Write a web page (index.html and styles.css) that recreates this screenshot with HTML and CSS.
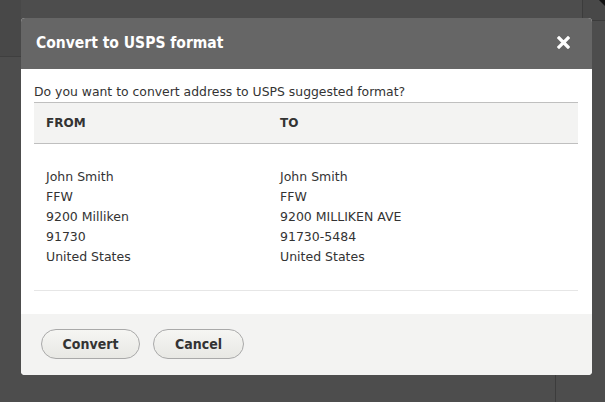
FILE: index.html
```html
<!DOCTYPE html>
<html lang="en">
<head>
<meta charset="utf-8">
<title>Convert to USPS format</title>
<link rel="stylesheet" href="styles.css">
</head>
<body>
<div class="page">
  <div class="backdrop">
    <span class="bg-line bg-line-left"></span>
    <span class="bg-line bg-line-vtop"></span>
    <span class="bg-line bg-line-htop"></span>
    <span class="bg-line bg-line-vbottom"></span>
    <span class="bg-corner"></span>
  </div>
  <div class="dialog" role="dialog">
    <div class="dialog-header">
      <h2 class="dialog-title">Convert to USPS format</h2>
      <button class="dialog-close" type="button" aria-label="Close">
        <svg width="13" height="13" viewBox="0 0 13 13"><path d="M2 2 L11 11 M11 2 L2 11" stroke="#fff" stroke-width="3.2" stroke-linecap="square" fill="none"/></svg>
      </button>
    </div>
    <div class="dialog-body">
      <p class="intro">Do you want to convert address to USPS suggested format?</p>
      <table class="addr-table">
        <thead>
          <tr><th class="col-from">FROM</th><th>TO</th></tr>
        </thead>
        <tbody>
          <tr>
            <td class="col-from">John Smith<br>FFW<br>9200 Milliken<br>91730<br>United States</td>
            <td>John Smith<br>FFW<br>9200 MILLIKEN AVE<br>91730-5484<br>United States</td>
          </tr>
        </tbody>
      </table>
    </div>
    <div class="dialog-footer">
      <button class="btn btn-convert" type="button">Convert</button>
      <button class="btn btn-cancel" type="button">Cancel</button>
    </div>
  </div>
</div>
</body>
</html>
```
FILE: styles.css
```css
html, body {
  margin: 0;
  padding: 0;
}
body {
  background: #4d4d4d;
  font-family: "DejaVu Sans", "Liberation Sans", sans-serif;
  color: #333;
}
.page {
  position: relative;
  width: 605px;
  height: 402px;
  overflow: hidden;
  background: #4d4d4d;
}
.backdrop {
  position: absolute;
  inset: 0;
}
.bg-line-left {
  position: absolute;
  left: 0;
  top: 0;
  width: 21px;
  height: 56px;
  background: #484848;
  border-bottom: 1px solid #3f3f3f;
}
.bg-line-vtop {
  position: absolute;
  left: 582px;
  top: 0;
  width: 1px;
  height: 20px;
  background: #3c3c3c;
}
.bg-line-htop {
  position: absolute;
  left: 583px;
  top: 0;
  width: 22px;
  height: 20px;
  background: #484848;
  border-bottom: 1px solid #3c3c3c;
}
.bg-line-vbottom {
  position: absolute;
  left: 555px;
  top: 375px;
  width: 1px;
  height: 27px;
  background: #3c3c3c;
}
.bg-corner {
  position: absolute;
  right: 0;
  top: 0;
  width: 0;
  height: 0;
  border-top: 6px solid #111;
  border-left: 6px solid transparent;
}
.dialog {
  position: absolute;
  left: 21px;
  top: 18px;
  width: 571px;
  background: #fff;
  border-radius: 4px;
  overflow: hidden;
}
.dialog-header {
  height: 51px;
  background: #666;
  display: flex;
  align-items: center;
  justify-content: space-between;
  padding: 0 22px 0 15px;
}
.dialog-title {
  margin: 0 0 2px;
  color: #fff;
  font-size: 15.5px;
  font-weight: bold;
  font-family: "DejaVu Sans Condensed", "DejaVu Sans", sans-serif;
}
.dialog-close {
  border: 0;
  padding: 0;
  margin-bottom: 3px;
  background: none;
  width: 13px;
  height: 13px;
  display: block;
}
.dialog-close svg {
  display: block;
}
.dialog-body {
  padding: 12px 14px 23px 13px;
}
.intro {
  margin: 0;
  font-size: 12.4px;
  line-height: 21px;
}
.addr-table {
  width: 100%;
  border-collapse: collapse;
  font-size: 12.5px;
}
.addr-table th {
  text-align: left;
  font-weight: bold;
  font-size: 12px;
  background: #f3f3f2;
  border-top: 1px solid #bfbfbf;
  border-bottom: 1px solid #bfbfbf;
  height: 40px;
  padding: 0 12px;
  vertical-align: middle;
}
.addr-table td {
  padding: 23px 12px 23px;
  line-height: 20px;
  vertical-align: top;
  border-bottom: 1px solid #e6e6e6;
}
.addr-table .col-from {
  width: 210px;
}
.dialog-footer {
  background: #f3f3f2;
  padding: 15px 20px 16px;
  display: flex;
  gap: 13px;
}
.btn {
  height: 30px;
  border: 1px solid #a9a9a9;
  border-radius: 15px;
  background: linear-gradient(#f6f6f3, #e8e8e4);
  font-family: "DejaVu Sans Condensed", "DejaVu Sans", sans-serif;
  font-size: 14px;
  font-weight: bold;
  color: #333;
  padding: 0 20px;
}
.btn-convert {
  width: 99px;
}
.btn-cancel {
  width: 91px;
}
```
